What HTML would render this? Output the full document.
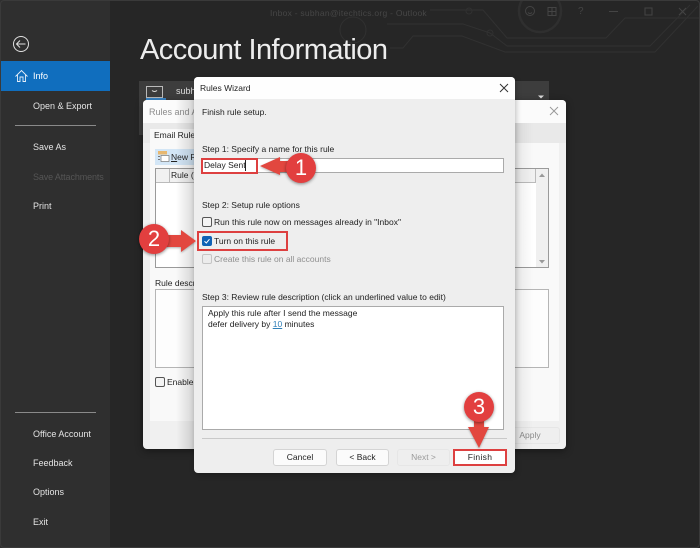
<!DOCTYPE html>
<html><head><meta charset="utf-8">
<style>
html,body{margin:0;padding:0;width:700px;height:548px;overflow:hidden;background:#262626}
body{font-family:"Liberation Sans",sans-serif;position:relative}
#w{position:absolute;left:0;top:0;width:700px;height:548px;overflow:hidden;filter:blur(.35px)}
.a{position:absolute;white-space:nowrap}
.s{color:#e4e4e4;font-size:9px;left:33px;line-height:12px}
.d{color:#222;font-size:8.5px;line-height:11px}
.btn{position:absolute;background:#fbfbfb;border:1px solid #d4d4d4;border-radius:3px;box-sizing:border-box;text-align:center;font-size:8.5px;line-height:15px;color:#222;height:17px}
.circ{position:absolute;border-radius:50%;background:#e23f3f;color:#fff;text-align:center;width:30px;height:30px;line-height:30px;font-size:22px;box-shadow:0 1px 3px rgba(0,0,0,.45)}
.rb{position:absolute;border:2px solid #dd4040;box-sizing:border-box}
.cb{position:absolute;width:10px;height:10px;box-sizing:border-box;border:1px solid #555;border-radius:2px;background:#f4f4f4}
</style></head><body><div id="w">

<!-- sidebar -->
<div class="a" style="left:0;top:0;width:110px;height:548px;background:#2f2f2f"></div>
<div class="a" style="left:0;top:61px;width:110px;height:30px;background:#106ebe"></div>

<svg class="a" style="left:0;top:0" width="700" height="548" fill="none">
  <circle cx="21" cy="44" r="7.5" stroke="#e0e0e0" stroke-width="1"/>
  <path d="M25.5 44H16.5M20 40.500L16.500 44L20 47.500" stroke="#e0e0e0" stroke-width="1"/>
  <path d="M15.500 76.500L21.500 70.500L27.500 76.500M17.500 75V81.500H20V77H23V81.500H25.500V75" stroke="#e6eef8" stroke-width=".9"/>
  <!-- circuit decoration -->
  <g stroke="#313131" stroke-width="1">
    <path d="M430 10H483L507 38H606L625 18H700"/>
    <path d="M387 24H463L490 33L507 46H650L690 5"/>
    <path d="M390 48H403L413 36H462L505 52H655L698 6"/>
    <circle cx="353" cy="30" r="13"/>
    <circle cx="469" cy="11" r="3"/>
    <circle cx="490" cy="33" r="3"/>
  </g>
  <circle cx="540" cy="11" r="21" stroke="#2f2f2f" stroke-width="2.500"/>
  <g stroke="#444" stroke-width="1">
    <circle cx="530" cy="11" r="4.500"/><path d="M528 12.500Q530 14.500 532 12.500"/>
    <rect x="548" y="7.500" width="8" height="8"/><path d="M552 7.500V15.500M548 11.500H556"/>
    <path d="M609 11.500H618"/>
    <rect x="645" y="8" width="7" height="7"/>
    <path d="M679 8L686 15M686 8L679 15"/>
  </g>
</svg>
<div class="a" style="left:578px;top:6px;font-size:10px;line-height:12px;color:#444">?</div>

<div class="a s" style="top:70px;color:#fff">Info</div>
<div class="a s" style="top:100px">Open &amp; Export</div>
<div class="a" style="left:15px;top:125px;width:81px;height:1px;background:#8a8a8a"></div>
<div class="a s" style="top:141px">Save As</div>
<div class="a s" style="top:171px;color:#555;letter-spacing:-.12px">Save Attachments</div>
<div class="a s" style="top:200px">Print</div>
<div class="a" style="left:15px;top:412px;width:81px;height:1px;background:#8a8a8a"></div>
<div class="a s" style="top:428px">Office Account</div>
<div class="a s" style="top:457px">Feedback</div>
<div class="a s" style="top:486px">Options</div>
<div class="a s" style="top:516px">Exit</div>

<!-- main -->
<div class="a" style="left:270px;top:8px;font-size:8.5px;color:#464646;line-height:11px;letter-spacing:.26px">Inbox - subhan@itechtics.org - Outlook</div>
<div class="a" style="left:140px;top:31px;font-size:29px;line-height:38px;color:#ededed;letter-spacing:-.55px;font-weight:normal">Account Information</div>

<div class="a" style="left:139px;top:81px;width:410px;height:54px;background:#3d3d3d"></div>
<svg class="a" style="left:145px;top:85px" width="20" height="16" fill="none"><rect x="1.500" y="1.500" width="16" height="11" stroke="#bbb"/><path d="M7 5.500Q9.500 7.500 12 5.500" stroke="#ddd"/></svg>
<div class="a" style="left:176px;top:85px;font-size:9px;color:#ddd;line-height:12px">subh</div>
<svg class="a" style="left:537px;top:94px" width="8" height="6"><path d="M1 1.500H7L4 4.500Z" fill="#ddd"/></svg>
<div class="a" style="left:146px;top:98px;width:20px;height:4px;background:#3a86c8"></div>

<!-- back dialog -->
<div class="a" style="left:143px;top:100px;width:423px;height:349px;background:#f0f0f0;border-radius:4px;overflow:hidden;box-shadow:0 2px 8px rgba(0,0,0,.4)">
  <div class="a" style="left:0;top:0;width:423px;height:23px;background:#fbfbfb"></div>
  <div class="a" style="left:6px;top:6px;font-size:9px;line-height:12px;color:#8c8c8c">Rules and A</div>
  <svg class="a" style="left:405px;top:5px" width="12" height="12"><path d="M2 2L10 10M10 2L2 10" stroke="#9a9a9a" stroke-width="1"/></svg>
  <div class="a" style="left:0;top:23px;width:423px;height:20px;background:#e9e9e9"></div>
  <div class="a" style="left:7px;top:43px;width:409px;height:278px;background:#f9f9f9"></div>
  <div class="a" style="left:7px;top:29px;width:50px;height:14px;background:#f9f9f9"></div>
  <div class="a d" style="left:11px;top:30px">Email Rules</div>
  <div class="a" style="left:12px;top:49px;width:45px;height:16px;background:#d3e6f6"></div>
  <svg class="a" style="left:14px;top:51px" width="13" height="12"><rect x="1" y="0" width="9" height="3.500" fill="#e8b870"/><rect x="4" y="4.500" width="8" height="6" fill="#fff" stroke="#777" stroke-width=".7"/><rect x="1" y="5" width="2" height="1" fill="#777"/><rect x="1" y="8" width="2" height="1" fill="#777"/></svg>
  <div class="a d" style="left:28px;top:52px"><u>N</u>ew R</div>
  <div class="a" style="left:12px;top:68px;width:394px;height:100px;box-sizing:border-box;border:1px solid #9a9a9a;background:#fff"></div>
  <div class="a" style="left:13px;top:69px;width:379px;height:13px;background:#f1f1f1;border-bottom:1px solid #bbb;border-right:1px solid #bbb"></div>
  <div class="a" style="left:26px;top:69px;width:1px;height:13px;background:#bbb"></div>
  <div class="a d" style="left:28px;top:70px">Rule (a</div>
  <div class="a" style="left:393px;top:69px;width:12px;height:98px;background:#f0f0f0"></div>
  <svg class="a" style="left:395px;top:72px" width="8" height="94"><path d="M1 5L4 1.500L7 5Z" fill="#999"/><path d="M1 88L4 91.500L7 88Z" fill="#999"/></svg>
  <div class="a d" style="left:12px;top:178px">Rule descr</div>
  <div class="a" style="left:12px;top:189px;width:394px;height:79px;box-sizing:border-box;border:1px solid #b5b5b5;background:#fdfdfd"></div>
  <div class="cb" style="left:12px;top:277px"></div>
  <div class="a d" style="left:24px;top:277px">Enable</div>
  <div class="btn" style="left:357px;top:327px;width:60px;color:#8a8a8a;background:#efefef;border-color:#e6e6e6">Apply</div>
</div>
<div class="a" style="left:176px;top:100px;width:18px;height:349px;background:linear-gradient(90deg,rgba(0,0,0,0),rgba(0,0,0,.14))"></div>
<div class="a" style="left:515px;top:123px;width:18px;height:326px;background:linear-gradient(270deg,rgba(0,0,0,0),rgba(0,0,0,.08))"></div>

<!-- wizard -->
<div class="a" style="left:194px;top:77px;width:321px;height:396px;background:#eeeeee;border-radius:4px;overflow:hidden;box-shadow:1px 2px 6px rgba(0,0,0,.25)">
  <div class="a" style="left:0;top:0;width:321px;height:22px;background:#fefefe"></div>
  <div class="a d" style="left:6px;top:5px;line-height:12px">Rules Wizard</div>
  <svg class="a" style="left:304px;top:5px" width="12" height="12"><path d="M2 2L10 10M10 2L2 10" stroke="#333" stroke-width="1"/></svg>
  <div class="a d" style="left:8px;top:30px">Finish rule setup.</div>
  <div class="a d" style="left:8px;top:67px">Step 1: Specify a name for this rule</div>
  <div class="a" style="left:8px;top:81px;width:302px;height:15px;box-sizing:border-box;border:1px solid #aaa;background:#fff"></div>
  <div class="a d" style="left:10px;top:83px">Delay Sent</div>
  <div class="a" style="left:51px;top:83px;width:1px;height:11px;background:#222"></div>
  <div class="a d" style="left:8px;top:123px">Step 2: Setup rule options</div>
  <div class="cb" style="left:8px;top:140px"></div>
  <div class="a d" style="left:20px;top:140px">Run this rule now on messages already in "Inbox"</div>
  <div class="cb" style="left:8px;top:159px;background:#0f62b5;border-color:#0f62b5"></div>
  <svg class="a" style="left:8px;top:159px" width="10" height="10"><path d="M2.500 5.300L4.300 7L7.500 3.200" stroke="#fff" stroke-width="1" fill="none"/></svg>
  <div class="a d" style="left:20px;top:159px">Turn on this rule</div>
  <div class="cb" style="left:8px;top:177px;border-color:#c5c5c5;background:#ececec"></div>
  <div class="a d" style="left:20px;top:177px;color:#8f8f8f">Create this rule on all accounts</div>
  <div class="a d" style="left:8px;top:215px">Step 3: Review rule description (click an underlined value to edit)</div>
  <div class="a" style="left:8px;top:229px;width:302px;height:124px;box-sizing:border-box;border:1px solid #aaa;background:#fff"></div>
  <div class="a d" style="left:14px;top:231px">Apply this rule after I send the message</div>
  <div class="a d" style="left:14px;top:242px">defer delivery by <u style="color:#2f7fb8">10</u> minutes</div>
  <div class="a" style="left:8px;top:361px;width:305px;height:1px;background:#c9c9c9"></div>
  <div class="btn" style="left:79px;top:372px;width:54px">Cancel</div>
  <div class="btn" style="left:142px;top:372px;width:53px">&lt; Back</div>
  <div class="btn" style="left:203px;top:372px;width:53px;color:#9a9a9a;background:#eeeeee;border-color:#e6e6e6">Next &gt;</div>
  <div class="btn" style="left:259px;top:372px;width:54px;background:#fff;border-color:#fff;line-height:15px;letter-spacing:.3px">Finish</div>
</div>

<!-- annotations -->
<div class="rb" style="left:201px;top:158px;width:57px;height:16px"></div>
<div class="rb" style="left:197px;top:231px;width:91px;height:20px"></div>
<div class="rb" style="left:453px;top:449px;width:54px;height:17px"></div>

<svg class="a" style="left:0;top:0;filter:drop-shadow(0 1px 1px rgba(0,0,0,.3))" width="700" height="548">
  <path d="M260 166L280 157V161H295V172H280V175Z" fill="#e2473f"/>
  <path d="M196 241L181 230V235H165V247H181V252Z" fill="#e2473f"/>
  <path d="M479 448L468 427H474V415H484V427H489Z" fill="#e2473f"/>
</svg>
<div class="circ" style="left:286px;top:153px">1</div>
<div class="circ" style="left:139px;top:224px">2</div>
<div class="circ" style="left:464px;top:392px">3</div>

<div class="a" style="left:0;top:0;width:700px;height:548px;box-sizing:border-box;border:1px solid #3a3a3a;border-radius:4px"></div>
</div></body></html>
